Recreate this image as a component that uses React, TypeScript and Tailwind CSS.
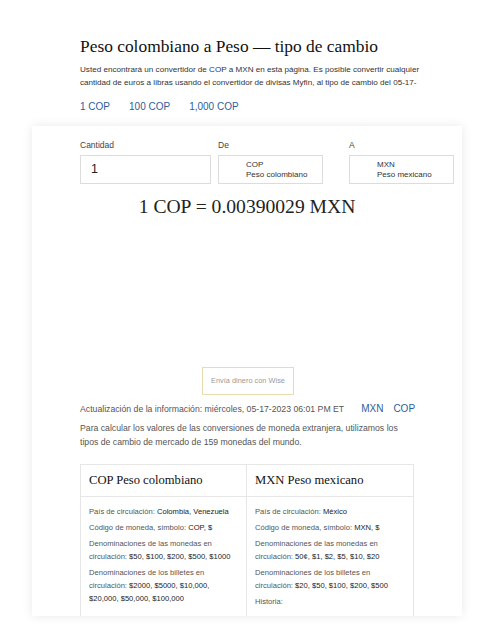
import React from 'react';

const sans = { fontFamily: '"Liberation Sans", Arial, sans-serif' };

function CurrencyBox({ code, name }: { code: string; name: string }) {
  return (
    <div className="h-[29px] w-[105px] border border-[#dcdcdc] bg-white pl-[27px] pt-[4px] text-[8px] leading-[10px] text-[#333]">
      <div>{code}</div>
      <div>{name}</div>
    </div>
  );
}

function InfoColumn({ title, rows, last }: { title: string; rows: React.ReactNode[]; last?: boolean }) {
  return (
    <div className={`flex flex-col ${last ? '' : 'border-r border-[#e6e6e6]'}`}>
      <div className="flex h-[32px] items-center border-b border-[#e6e6e6] px-[8px] font-['Liberation_Serif',serif] text-[12.6px] text-[#111]">
        {title}
      </div>
      <div className="flex flex-col gap-[3px] px-[8px] pt-[8px] pb-[14px] text-[7.6px] leading-[13px] text-[#555]">
        {rows.map((r, i) => (
          <div key={i}>{r}</div>
        ))}
      </div>
    </div>
  );
}

export default function App() {
  const b = (t: string) => <span className="text-[#222]">{t}</span>;

  return (
    <div className="min-h-[640px] w-[494px] bg-white pt-[36px]" style={sans}>
      {/* Header */}
      <div className="px-[80px]">
        <h1 className="font-['Liberation_Serif',serif] text-[17.4px] leading-[20px] text-[#111]">
          Peso colombiano a Peso — tipo de cambio
        </h1>
        <p className="mt-[7px] whitespace-nowrap text-[8.1px] leading-[13px] text-[#333]">
          Usted encontrará un convertidor de COP a MXN en esta página. Es posible convertir cualquier
          <br />
          cantidad de euros a libras usando el convertidor de divisas Myfin, al tipo de cambio del 05-17-
        </p>
        <div className="mt-[12px] flex gap-[19px] text-[10px] leading-[12px] text-[#2f5d9c]">
          <span>1 COP</span>
          <span>100 COP</span>
          <span>1,000 COP</span>
        </div>
      </div>

      {/* Converter card */}
      <div className="mx-[32px] mt-[13px] h-[490px] w-[430px] overflow-hidden bg-white pt-[14px] shadow-[0_0_10px_rgba(0,0,0,0.09)]">
        <div className="pl-[48px]">
          <div className="flex text-[8.5px] leading-[10px] text-[#444]">
            <span className="w-[138px]">Cantidad</span>
            <span className="w-[131px]">De</span>
            <span>A</span>
          </div>
          <div className="mt-[5px] flex">
            <div className="flex h-[29px] w-[131px] items-center border border-[#dcdcdc] pl-[10px] text-[12.5px] text-[#222]">
              1
            </div>
            <div className="ml-[7px]">
              <CurrencyBox code="COP" name="Peso colombiano" />
            </div>
            <div className="ml-[26px]">
              <CurrencyBox code="MXN" name="Peso mexicano" />
            </div>
          </div>
        </div>

        <div className="mt-[10px] text-center font-['Liberation_Serif',serif] text-[19.6px] leading-[26px] text-[#222]">
          1 COP = 0.00390029 MXN
        </div>

        <div className="mt-[147px] flex justify-center pl-[2px]">
          <div className="flex h-[28px] w-[92px] items-center justify-center border border-[#eadcb0] text-[7.4px] text-[#9a9a9a]">
            Envía dinero con Wise
          </div>
        </div>

        <div className="px-[48px]">
          <div className="mt-[8px] flex items-center whitespace-nowrap text-[8.7px] leading-[12px] text-[#555]">
            <span>Actualización de la información: miércoles, 05-17-2023 06:01 PM ET</span>
            <span className="ml-[17px] text-[10px] text-[#2f5d9c]">MXN</span>
            <span className="ml-[10px] text-[10px] text-[#2f5d9c]">COP</span>
          </div>
          <p className="mt-[6px] whitespace-nowrap text-[8.7px] leading-[14px] text-[#555]">
            Para calcular los valores de las conversiones de moneda extranjera, utilizamos los
            <br />
            tipos de cambio de mercado de 159 monedas del mundo.
          </p>

          <div className="mt-[15px] grid w-[334px] grid-cols-2 border border-[#e6e6e6]">
            <InfoColumn
              title="COP Peso colombiano"
              rows={[
                <>País de circulación: {b('Colombia, Venezuela')}</>,
                <>Código de moneda, símbolo: {b('COP, $')}</>,
                <>Denominaciones de las monedas en circulación: {b('$50, $100, $200, $500, $1000')}</>,
                <>Denominaciones de los billetes en circulación: {b('$2000, $5000, $10,000, $20,000, $50,000, $100,000')}</>,
              ]}
            />
            <InfoColumn
              title="MXN Peso mexicano"
              last
              rows={[
                <>País de circulación: {b('México')}</>,
                <>Código de moneda, símbolo: {b('MXN, $')}</>,
                <>Denominaciones de las monedas en circulación: {b('50¢, $1, $2, $5, $10, $20')}</>,
                <>Denominaciones de los billetes en circulación: {b('$20, $50, $100, $200, $500')}</>,
                <>Historia:</>,
              ]}
            />
          </div>
        </div>
      </div>
    </div>
  );
}
